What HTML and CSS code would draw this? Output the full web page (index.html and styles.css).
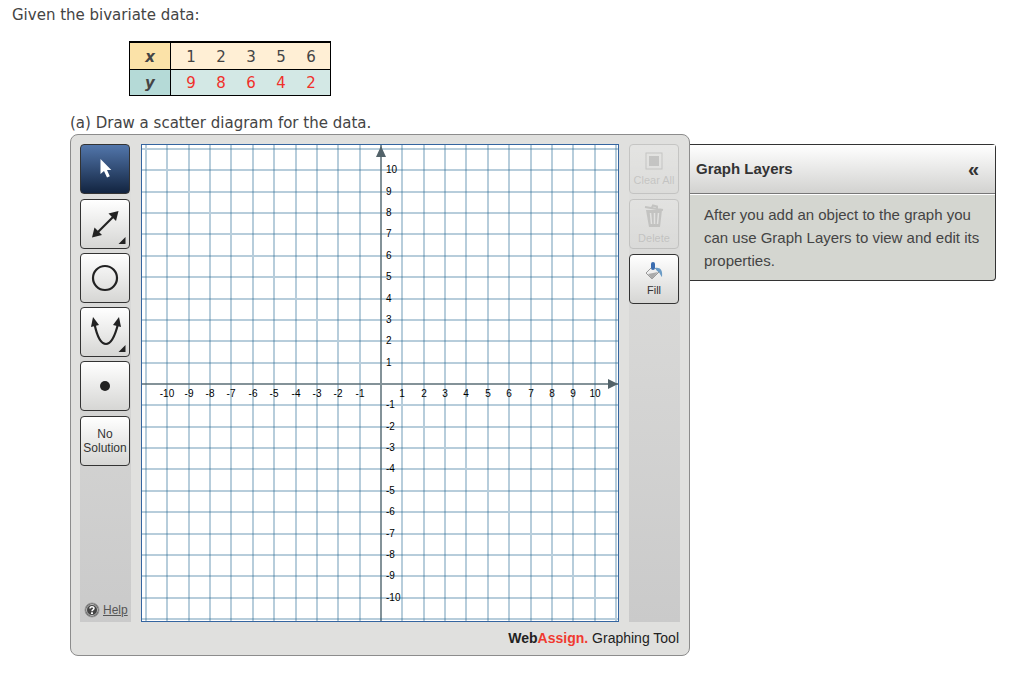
FILE: index.html
```
<!DOCTYPE html>
<html lang="en">
<head>
  <meta charset="UTF-8" />
  <meta name="viewport" content="width=device-width, initial-scale=1.0"/>
  <title>Scatter Diagram</title>
  <link rel="stylesheet" href="styles.css">
</head>
<body>
  <p class="intro">Given the bivariate data:</p>

  <table class="data">
    <tr class="row-x">
      <th scope="row">x</th>
      <td>1</td><td>2</td><td>3</td><td>5</td><td>6</td>
    </tr>
    <tr class="row-y">
      <th scope="row">y</th>
      <td>9</td><td>8</td><td>6</td><td>4</td><td>2</td>
    </tr>
  </table>

  <div class="part">
    <p class="question">(a) Draw a scatter diagram for the data.</p>

    <div class="workspace">
      <div class="tool">
        <div class="tool-main">
          <div class="toolbar">
            <button class="tool-btn selected" aria-label="Pointer">
              <svg width="48" height="48" viewBox="0 0 48 48">
                <path d="M19.500 14V29L23 26L26 32.500L28.800 31.200L26 25H30.300Z" fill="#fff"/>
              </svg>
            </button>
            <div class="group">
              <button class="tool-btn" aria-label="Line">
                <svg width="48" height="48" viewBox="0 0 48 48">
                  <path d="M15 34L33 16" stroke="#222" stroke-width="2.200"/>
                  <path d="M37.500 11L35 21L27.500 13.500Z" fill="#222"/>
                  <path d="M11 37.500L13.500 27.500L21 35Z" fill="#222"/>
                  <path d="M44.500 37V44H37.500Z" fill="#222"/>
                </svg>
              </button>
              <button class="tool-btn" aria-label="Circle">
                <svg width="48" height="48" viewBox="0 0 48 48">
                  <circle cx="24" cy="24" r="12" fill="none" stroke="#222" stroke-width="2.200"/>
                </svg>
              </button>
              <button class="tool-btn" aria-label="Parabola">
                <svg width="48" height="48" viewBox="0 0 48 48">
                  <path d="M13.500 16C16 28 20 36 25 36S34 28 37 16" fill="none" stroke="#222" stroke-width="2.200"/>
                  <path d="M12 9L18 17L10 19Z" fill="#222"/>
                  <path d="M38 9L40 19L32 17Z" fill="#222"/>
                  <path d="M44.500 37V44H37.500Z" fill="#222"/>
                </svg>
              </button>
              <button class="tool-btn" aria-label="Point">
                <svg width="48" height="48" viewBox="0 0 48 48">
                  <circle cx="24" cy="24" r="5" fill="#222"/>
                </svg>
              </button>
            </div>
            <button class="tool-btn text-btn">No Solution</button>
            <a class="help" href="#">
              <svg width="16" height="16" viewBox="0 0 16 16">
                <circle cx="8" cy="8" r="7" fill="#555" stroke="#999" stroke-width="1"/>
                <circle cx="8" cy="8" r="5.500" fill="#444" stroke="#bbb" stroke-width="1"/>
                <path d="M6 6.500C6 4.300 10 4.300 10 6.300C10 7.600 8 7.500 8 9.200" fill="none" stroke="#fff" stroke-width="1.500"/>
                <rect x="7" y="10.300" width="2" height="1.700" fill="#fff"/>
              </svg>
              <span>Help</span>
            </a>
          </div>

          <svg class="graph" id="graph" viewBox="0 0 476 476" role="img" aria-label="Coordinate grid"></svg>

          <div class="toolbar">
            <button class="tool-btn icon-text" disabled>
              <svg width="18" height="18" viewBox="0 0 18 18">
                <rect x="1" y="1" width="16" height="16" fill="none" stroke="#333"/>
                <rect x="4" y="4" width="10" height="10" fill="#333"/>
              </svg>
              <span>Clear All</span>
            </button>
            <button class="tool-btn icon-text" disabled>
              <svg width="20" height="24" viewBox="0 0 20 24">
                <path d="M1 3L19 6M8 3.500L9 1.500L13 2.500L13 4.500" fill="none" stroke="#333" stroke-width="2"/>
                <path d="M2 6H18L16 23H5Z" fill="#333"/>
                <path d="M6.500 9L7.500 20M10.500 9V20M14.500 9L13.500 20" stroke="#fff" stroke-width="1.500"/>
              </svg>
              <span>Delete</span>
            </button>
            <button class="tool-btn icon-text">
              <svg width="18" height="18" viewBox="0 0 18 18">
                <path d="M1 11L8 4L14 10L7 17Z" fill="#eee" stroke="#999"/>
                <path d="M3 12L13 10L7 17Z" fill="#aaa"/>
                <path d="M10 6C15 5 18 8 17 15C15 13 15 10 12 9Z" fill="#6c9cc6"/>
                <rect x="6" y="0" width="4" height="8" rx="2" fill="#3b6db0"/>
              </svg>
              <span>Fill</span>
            </button>
          </div>
        </div>
        <div class="brand"><b>Web<span>Assign.</span></b> Graphing Tool</div>
      </div>

      <div class="layers">
        <div class="layers-head">
          <h2>Graph Layers</h2>
          <button class="collapse" aria-label="Collapse">«</button>
        </div>
        <p>After you add an object to the graph you can use Graph Layers to view and edit its properties.</p>
      </div>
    </div>
  </div>

  <script>
    const graph = document.getElementById("graph");
    const center = 239;
    const step = 235 / 11;
    let out = "";

    // Grid lines
    for (let i = -11; i <= 11; i++) {
      const p = Math.round(center + i * step);
      const cls = i === 0 ? "axis" : "grid";
      out += `<path class="${cls}" d="M${p} 0V476M0 ${p}H476"/>`;
    }

    // Arrow heads
    out += `<path class="arrow" d="M239 1L244 12H234Z"/>`;
    out += `<path class="arrow" d="M476 239L466 234V244Z"/>`;

    // Axis labels
    for (let i = -10; i <= 10; i++) {
      if (i === 0) continue;
      const x = Math.round(center + i * step);
      const y = Math.round(center - i * step);
      out += `<text x="${x}" y="252" text-anchor="middle">${i}</text>`;
      out += `<text x="244" y="${y + 3}">${i}</text>`;
    }

    graph.innerHTML = out;
  </script>
</body>
</html>
```
FILE: styles.css
```
body {
  margin: 0;
  padding: 6px 28px 30px 12px;
  font-family: Verdana, "DejaVu Sans", sans-serif;
  font-size: 15px;
  line-height: 18px;
  color: #444;
  background: #fff;
}

p {
  margin: 0;
}

.data {
  margin: 17px 0 18px 117px;
  border-collapse: collapse;
  border: 1px solid #000;
  border-top: 2px solid #000;
}

.data tr + tr {
  border-top: 1px solid #000;
}

.data th,
.data td {
  width: 30px;
  height: 25px;
  padding: 0;
  text-align: center;
}

.data .row-x th,
.data .row-x td {
  padding-top: 1px;
}

.data th {
  width: 40px;
  border-right: 1px solid #000;
  font-style: italic;
}

.data th + td {
  padding-left: 5px;
}

.data td:last-child {
  padding-right: 4px;
}

.row-x {
  background: #ffefd5;
}

.row-x th {
  background: #fbe2a8;
}

.row-y {
  background: #d3e8e5;
}

.row-y th {
  background: #b5dad7;
}

.row-y td {
  color: #f0302a;
}

.part {
  margin-left: 58px;
}

.workspace {
  display: flex;
  align-items: flex-start;
  margin-top: 2px;
  font-family: Arial, "Liberation Sans", sans-serif;
}

.tool {
  flex: 1;
  min-width: 0;
  padding: 9px;
  border: 1px solid #8c8c8c;
  border-radius: 8px;
  background: #e0e0de;
}

.tool-main {
  display: flex;
  gap: 10px;
}

.toolbar {
  display: flex;
  flex-direction: column;
  flex: none;
  gap: 5px;
  width: 51px;
  background: linear-gradient(to bottom, #e0e0de, #cacaca);
}

.group {
  display: flex;
  flex-direction: column;
  gap: 4px;
}

.tool-btn {
  display: flex;
  flex-direction: column;
  align-items: center;
  justify-content: center;
  width: 50px;
  height: 50px;
  padding: 0;
  border: 1px solid #333;
  border-radius: 4px;
  background: linear-gradient(to bottom, #fff, #d6d6d4);
  font-family: inherit;
  font-size: 11px;
  line-height: 14px;
  color: #333;
  cursor: pointer;
}

.tool-btn.selected {
  background: linear-gradient(to bottom, #5276ab, #122440);
}

.tool-btn:disabled {
  opacity: 0.15;
  cursor: default;
}

.text-btn {
  font-size: 12px;
}

.icon-text {
  gap: 3px;
}

.help {
  display: flex;
  align-items: center;
  gap: 3px;
  margin-top: auto;
  padding: 0 0 3px 4px;
  font-size: 12px;
  color: #555;
}

.help svg {
  flex: none;
}

.graph {
  flex: 1;
  min-width: 0;
  box-sizing: border-box;
  border: 1px solid #3565a0;
  background: #fff;
}

.grid {
  stroke: #1f6390;
  stroke-opacity: 0.32;
  stroke-width: 2;
  shape-rendering: crispEdges;
}

.axis {
  stroke: #4f646c;
  stroke-opacity: 0.7;
  stroke-width: 2;
  shape-rendering: crispEdges;
}

.arrow {
  fill: #526269;
}

.graph text {
  font-size: 10px;
  fill: #000;
}

.brand {
  padding: 8px 1px 0 0;
  font-size: 14px;
  line-height: 16px;
  text-align: right;
  color: #222;
}

.brand span {
  color: #f03a30;
}

.layers {
  flex: 0 0 306px;
  box-sizing: border-box;
  margin-top: 10px;
  border: 1px solid #333;
  border-left: none;
  border-radius: 0 4px 4px 0;
  background: #d4d6d0;
}

.layers-head {
  display: flex;
  align-items: center;
  justify-content: space-between;
  height: 48px;
  padding: 0 16px 0 6px;
  border-bottom: 1px solid #777;
  background: linear-gradient(to bottom, #fff, #d2d2d0);
}

.layers-head h2 {
  margin: 0;
  font-size: 15px;
  color: #333;
}

.collapse {
  padding: 0;
  border: none;
  background: none;
  font: bold 20px Arial, "Liberation Sans", sans-serif;
  color: #333;
  cursor: pointer;
}

.layers p {
  padding: 8px 14px;
  border-top: 1px solid #fff;
  font-size: 15px;
  line-height: 23px;
}

@media (max-width: 800px) {
  .workspace {
    flex-direction: column;
    align-items: stretch;
  }

  .layers {
    flex: none;
  }
}
```
